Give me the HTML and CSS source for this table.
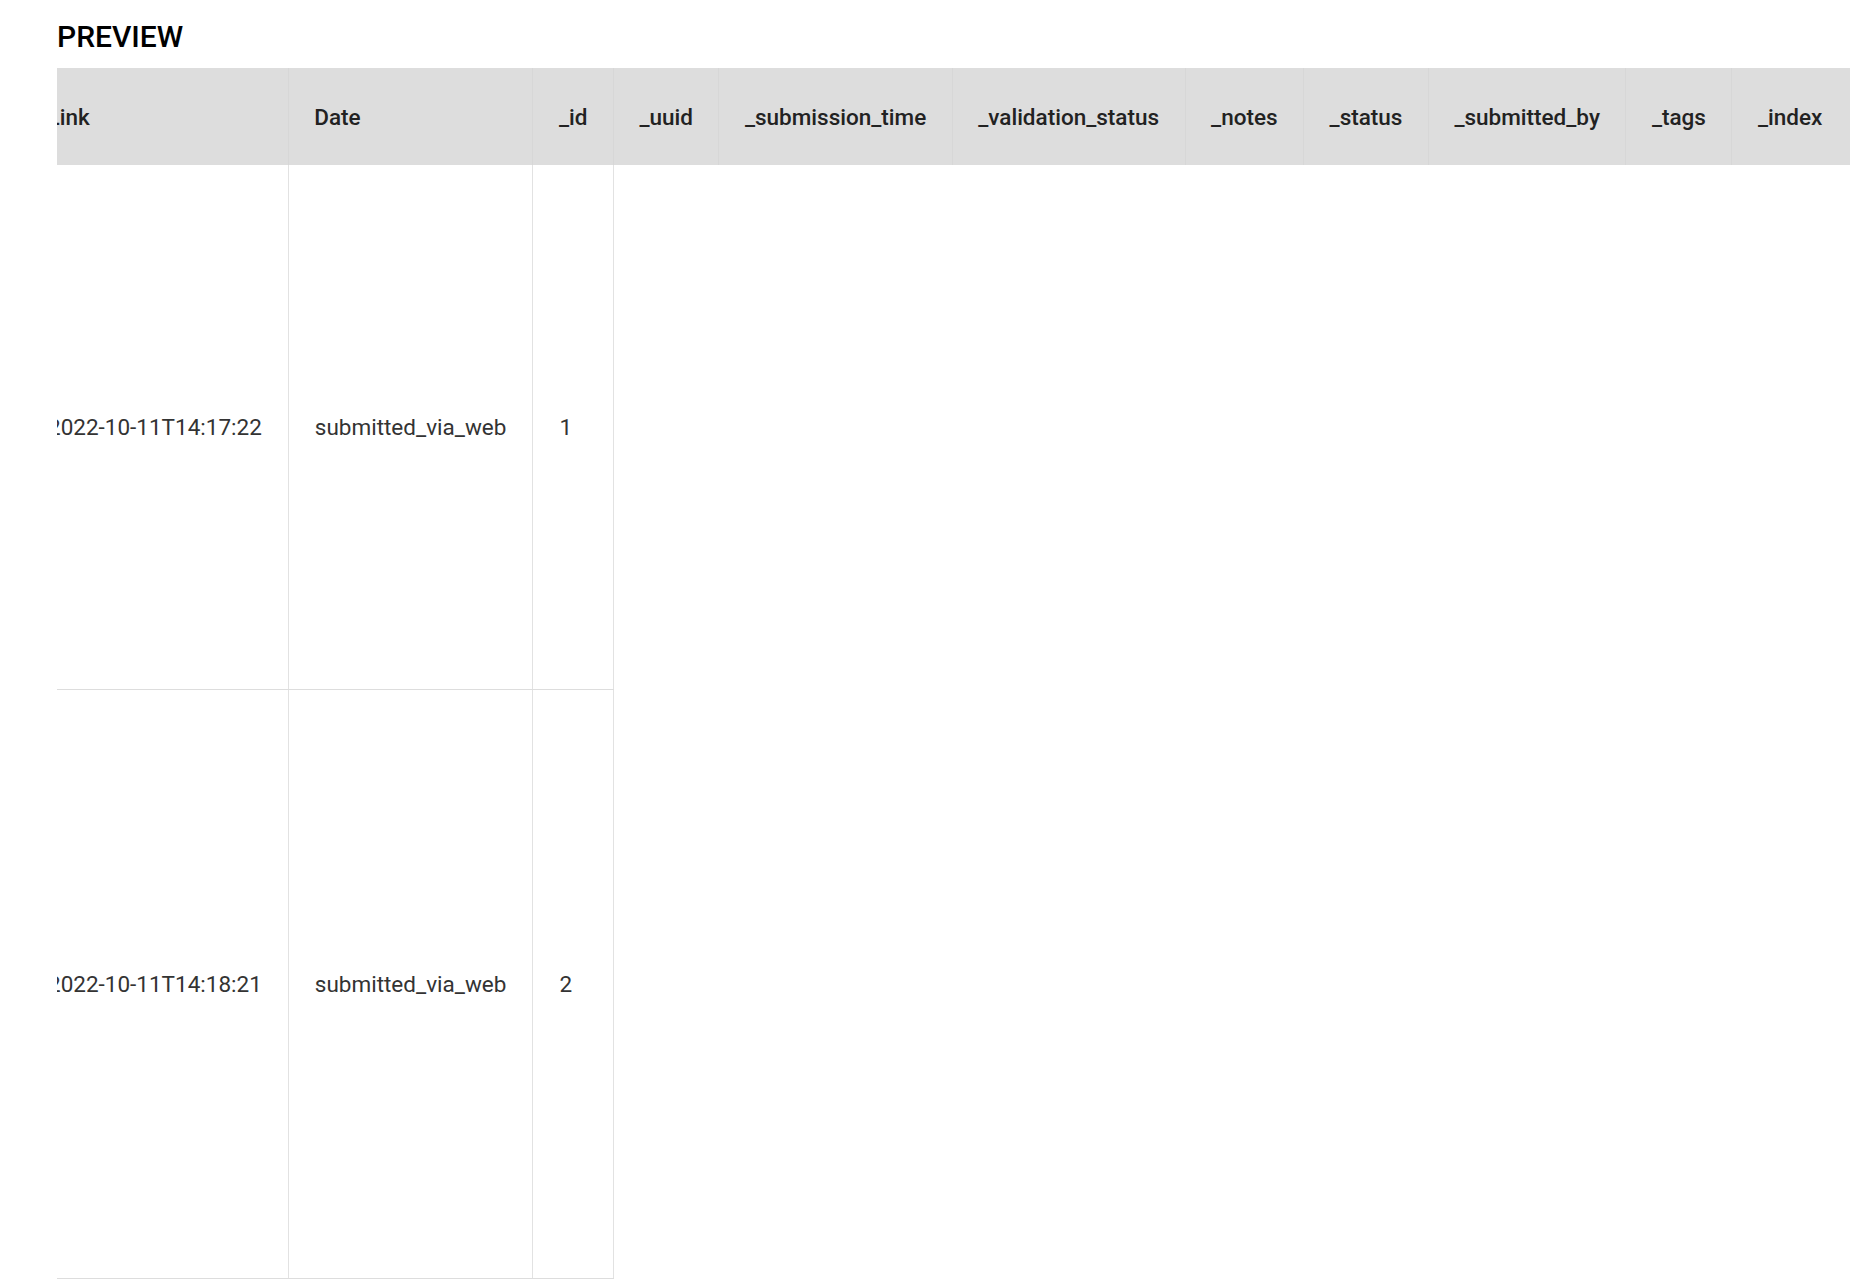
FILE: index.html
```html
<!DOCTYPE html>
<html lang="en">
<head>
<meta charset="utf-8">
<title>Preview</title>
<link rel="stylesheet" href="styles.css">
</head>
<body>
<main class="page">
  <h2 class="title">PREVIEW</h2>
  <div class="table-wrap">
    <table class="preview-table">
      <thead>
        <tr>
          <th>Link</th>
          <th>Date</th>
          <th>_id</th>
          <th>_uuid</th>
          <th>_submission_time</th>
          <th>_validation_status</th>
          <th>_notes</th>
          <th>_status</th>
          <th>_submitted_by</th>
          <th>_tags</th>
          <th>_index</th>
        </tr>
      </thead>
      <tbody>
        <tr class="row-1">
          <td>2022-10-11T14:17:22</td>
          <td>submitted_via_web</td>
          <td>1</td>
        </tr>
        <tr class="row-2">
          <td>2022-10-11T14:18:21</td>
          <td>submitted_via_web</td>
          <td>2</td>
        </tr>
      </tbody>
    </table>
  </div>
</main>
</body>
</html>
```

FILE: styles.css
```css
html, body {
  margin: 0;
  padding: 0;
  background: #ffffff;
}

body {
  font-family: Roboto, "Noto Sans", "Liberation Sans", sans-serif;
  overflow: hidden;
}

.page {
  padding: 20px 0 0 57px;
}

.title {
  margin: 0 0 14px 0;
  font-size: 30px;
  line-height: 34px;
  font-weight: 500;
  color: #000000;
}

.table-wrap {
  overflow: hidden;
}

.preview-table {
  border-collapse: collapse;
  margin-left: -35px;
  white-space: nowrap;
}

.preview-table th {
  height: 97px;
  padding: 0 25.5px;
  background: #dddddd;
  color: #222222;
  font-size: 22.5px;
  font-weight: 500;
  text-align: left;
  vertical-align: middle;
  border-right: 1px solid #d7d7d7;
}

.preview-table th:last-child {
  border-right: none;
  padding-right: 28px;
}

.preview-table td {
  padding: 0 26px;
  color: #333333;
  font-size: 22.5px;
  font-weight: 400;
  text-align: left;
  vertical-align: middle;
  border-right: 1px solid #e2e2e2;
  border-bottom: 1px solid #dddddd;
}

.row-1 td {
  height: 524px;
}

.row-2 td {
  height: 588px;
}
```
